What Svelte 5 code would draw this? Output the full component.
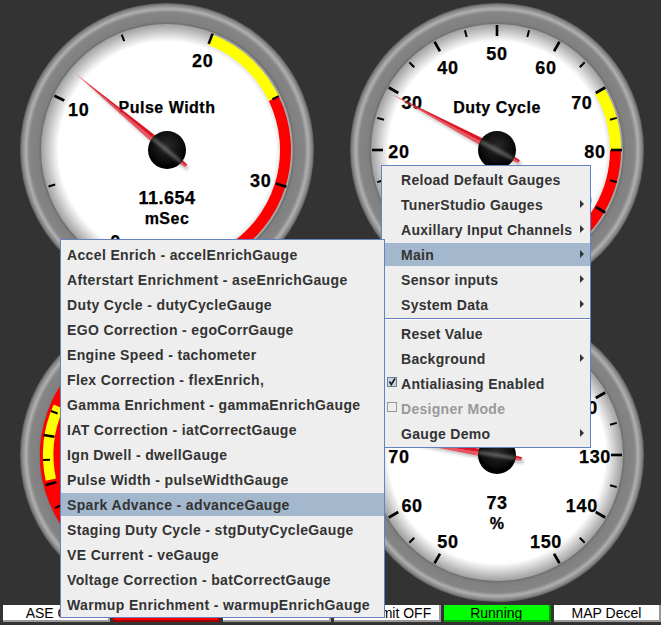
<script>
  const gauges = [
    { id: "pw", title: "Pulse Width", value: "11.654", units: "mSec", min: 0, max: 35, major: 10, minor: 5, needle: 11.654,
      arcs: [{ from: 20, to: 25, color: "#ffff00", r: 124, w: 11 }, { from: 25, to: 35, color: "#ff0000", r: 124, w: 11 }] },
    { id: "duty", title: "Duty Cycle", value: "29.3", units: "%", min: 0, max: 100, major: 10, minor: 5, needle: 29.3,
      arcs: [{ from: 70, to: 80, color: "#ffff00", r: 124, w: 11 }, { from: 80, to: 100, color: "#ff0000", r: 124, w: 11 }] },
    { id: "adv", title: "Spark Advance", value: "65.0", units: "deg", min: 0, max: 130, major: 10, minor: 5, needle: 65,
      arcs: [{ from: 0, to: 65, color: "#ff0000", r: 127, w: 22 }, { from: 20.8, to: 36.4, color: "#ffff00", r: 124, w: 10.5 }] },
    { id: "ve", title: "VE Current", value: "73", units: "%", min: 50, max: 150, major: 10, minor: 5, needle: 73, arcs: [] }
  ];

  const menuLeft = [
    "Accel Enrich - accelEnrichGauge",
    "Afterstart Enrichment - aseEnrichGauge",
    "Duty Cycle - dutyCycleGauge",
    "EGO Correction - egoCorrGauge",
    "Engine Speed - tachometer",
    "Flex Correction - flexEnrich,",
    "Gamma Enrichment - gammaEnrichGauge",
    "IAT Correction - iatCorrectGauge",
    "Ign Dwell - dwellGauge",
    "Pulse Width - pulseWidthGauge",
    "Spark Advance - advanceGauge",
    "Staging Duty Cycle - stgDutyCycleGauge",
    "VE Current - veGauge",
    "Voltage Correction - batCorrectGauge",
    "Warmup Enrichment - warmupEnrichGauge"
  ];

  const menuTop = [
    { label: "Reload Default Gauges" },
    { label: "TunerStudio Gauges", sub: true },
    { label: "Auxillary Input Channels", sub: true },
    { label: "Main", sub: true, active: true },
    { label: "Sensor inputs", sub: true },
    { label: "System Data", sub: true }
  ];

  const menuBottom = [
    { label: "Reset Value" },
    { label: "Background", sub: true },
    { label: "Antialiasing Enabled", check: true },
    { label: "Designer Mode", check: true, disabled: true },
    { label: "Gauge Demo", sub: true }
  ];

  const indicators = [
    { label: "ASE OFF" },
    { label: "", color: "red" },
    { label: "WUE OFF" },
    { label: "Rev Limit OFF" },
    { label: "Running", color: "green" },
    { label: "MAP Decel" }
  ];

  const C = 150;

  function angle(g, v) {
    return -150 + ((v - g.min) / (g.max - g.min)) * 300;
  }

  function pt(a, r) {
    const t = (a * Math.PI) / 180;
    return [C + r * Math.sin(t), C - r * Math.cos(t)];
  }

  function arcPath(g, arc) {
    const rad = arc.r - arc.w / 2;
    const a = pt(angle(g, arc.from), rad);
    const b = pt(angle(g, arc.to), rad);
    const large = angle(g, arc.to) - angle(g, arc.from) > 180 ? 1 : 0;
    return `M${a[0]} ${a[1]} A${rad} ${rad} 0 ${large} 1 ${b[0]} ${b[1]}`;
  }

  function ticks(g) {
    const out = [];
    const n = Math.round((g.max - g.min) / g.minor);
    for (let i = 0; i <= n; i++) {
      const v = g.min + i * g.minor;
      const isMajor = (v - g.min) % g.major === 0;
      const a = angle(g, v);
      const p1 = pt(a, isMajor ? 125 : 124);
      const p2 = pt(a, isMajor ? 114 : 117);
      // the lone "0" sits further out than the two digit labels
      const p3 = pt(a, v === 0 ? 103 : 98);
      out.push({ v, isMajor, x1: p1[0], y1: p1[1], x2: p2[0], y2: p2[1], lx: p3[0], ly: p3[1] + 2 });
    }
    return out;
  }
</script>

<div class="page">
  <div class="gauges">
    {#each gauges as g}
      <svg class="gauge" width="300" height="300" viewBox="0 0 300 300">
        <defs>
          <radialGradient id="bezel-{g.id}" gradientUnits="userSpaceOnUse" cx="150" cy="150" r="147">
            <stop offset="0.85" stop-color="#666666" />
            <stop offset="0.875" stop-color="#808080" />
            <stop offset="0.935" stop-color="#858585" />
            <stop offset="0.96" stop-color="#b0b0b0" />
            <stop offset="0.985" stop-color="#858585" />
            <stop offset="1" stop-color="#5c5c5c" />
          </radialGradient>
          <radialGradient id="face-{g.id}" gradientUnits="userSpaceOnUse" cx="150" cy="150" r="126">
            <stop offset="0.86" stop-color="#ffffff" />
            <stop offset="1" stop-color="#a0a0a0" />
          </radialGradient>
          <radialGradient id="hub-{g.id}" gradientUnits="userSpaceOnUse" cx="150" cy="146" r="20">
            <stop offset="0" stop-color="#2a2a2a" />
            <stop offset="0.8" stop-color="#0c0c0c" />
            <stop offset="1" stop-color="#000000" />
          </radialGradient>
          <filter id="blur-{g.id}" x="-100%" y="-30%" width="300%" height="160%">
            <feGaussianBlur stdDeviation="1.4" />
          </filter>
        </defs>

        <circle cx="150" cy="150" r="147" fill="url(#bezel-{g.id})" />
        <circle cx="150" cy="150" r="126" fill="url(#face-{g.id})" />

        {#each g.arcs as arc}
          <path d={arcPath(g, arc)} fill="none" stroke={arc.color} stroke-width={arc.w} />
        {/each}

        {#each ticks(g) as t}
          <line x1={t.x1} y1={t.y1} x2={t.x2} y2={t.y2} stroke="#000" stroke-width={t.isMajor ? 2.6 : 2} />
          {#if t.isMajor}
            <text class="label" x={t.lx} y={t.ly} dy="0.36em">{t.v}</text>
          {/if}
        {/each}

        <text class="title" x="150" y="107" dy="0.36em">{g.title}</text>
        <text class="value" x="150" y="198" dy="0.36em">{g.value}</text>
        <text class="units" x="150" y="218" dy="0.36em">{g.units}</text>

        <polygon points="150,33 154,150 152,175 148,175 146,150" fill="#000" opacity="0.22" filter="url(#blur-{g.id})"
          transform="translate(2 3) rotate({angle(g, g.needle)} 150 150)" />
        <g transform="rotate({angle(g, g.needle)} 150 150)">
          <polygon points="150,31 145.7,150 148.4,175 150,175" fill="#e85560" />
          <polygon points="150,31 154.3,150 151.6,175 150,175" fill="#dc1624" />
        </g>

        <circle cx="150" cy="150" r="19" fill="url(#hub-{g.id})" />

        <g transform="rotate({angle(g, g.needle)} 150 150)">
          <polygon points="148,131 151.5,131 151.5,169 148,169" fill="#fff" opacity="0.32" filter="url(#blur-{g.id})" />
        </g>
      </svg>
    {/each}
  </div>

  <div class="indicators">
    {#each indicators as item}
      <div class="indicator {item.color ?? ''}">{item.label}</div>
    {/each}
  </div>

  <div class="menu menu-right">
    {#each menuTop as item}
      <div class="item" class:active={item.active}>
        <span>{item.label}</span>
        {#if item.sub}<i class="arrow"></i>{/if}
      </div>
    {/each}
    <div class="sep"></div>
    {#each menuBottom as item}
      <div class="item" class:disabled={item.disabled}>
        {#if item.check}
          <svg class="check" width="10" height="10" viewBox="0 0 10 10">
            <rect x="0.5" y="0.5" width="9" height="9" fill={item.disabled ? "#eeeeee" : "#c9d6e2"} stroke={item.disabled ? "#999" : "#6b7f94"} />
            {#if !item.disabled}
              <path d="M2.5 4.5 L4.3 7.5 L8 1.5" fill="none" stroke="#222" stroke-width="1.7" />
            {/if}
          </svg>
        {/if}
        <span>{item.label}</span>
        {#if item.sub}<i class="arrow"></i>{/if}
      </div>
    {/each}
  </div>

  <div class="menu menu-left">
    {#each menuLeft as label, i}
      <div class="item" class:active={i === 10}><span>{label}</span></div>
    {/each}
  </div>
</div>

<style>
  :global(body) {
    margin: 0;
    background: #333333;
  }

  .page {
    position: relative;
    width: 661px;
    height: 625px;
    overflow: hidden;
    background: #333333;
    font-family: "Liberation Sans", Arial, sans-serif;
  }

  .gauges {
    display: grid;
    grid-template-columns: 331px 330px;
    grid-auto-rows: 300px;
    row-gap: 5px;
    padding-left: 1px;
  }

  .gauge {
    display: block;
    justify-self: center;
  }

  .label,
  .title,
  .value,
  .units {
    font-weight: bold;
    text-anchor: middle;
    fill: #000;
    stroke: #000;
    stroke-width: 0.25px;
  }

  .label {
    font-size: 18px;
    letter-spacing: 0.7px;
  }

  .title {
    font-size: 16px;
    letter-spacing: 0.5px;
  }

  .value {
    font-size: 18px;
    letter-spacing: 0.5px;
  }

  .units {
    font-size: 16px;
    letter-spacing: 0.5px;
  }

  .indicators {
    display: flex;
    gap: 3px;
    height: 17px;
    padding-left: 3px;
  }

  .indicator {
    flex: 1;
    box-sizing: border-box;
    background: #ffffff;
    border-right: 2px solid #999999;
    border-bottom: 2px solid #999999;
    color: #000;
    font-size: 14px;
    line-height: 16px;
    text-align: center;
    white-space: nowrap;
    overflow: hidden;
  }

  .indicator.green {
    background: #00ff00;
    border-color: #009900;
  }

  .indicator.red {
    background: #ff0000;
    border-color: #990000;
  }

  .menu {
    position: absolute;
    box-sizing: border-box;
    background: #eeeeee;
    border: 1px solid #6382bf;
    color: #333333;
    font-size: 14px;
    font-weight: bold;
    letter-spacing: 0.3px;
  }

  .menu-right {
    left: 381px;
    top: 165px;
    width: 210px;
    height: 283px;
    padding-top: 1px;
  }

  .menu-left {
    left: 60px;
    top: 239px;
    width: 325px;
    height: 379px;
    padding-top: 2px;
    letter-spacing: 0.36px;
    z-index: 1;
  }

  .item {
    position: relative;
    display: flex;
    align-items: center;
    height: 25px;
    white-space: nowrap;
  }

  .item span {
    position: relative;
  }

  .menu-right .item {
    padding-left: 19px;
  }

  .menu-left .item {
    padding-left: 6px;
  }

  .item.active::before {
    content: "";
    position: absolute;
    inset: 1px 0;
    background: #a3b8cc;
  }

  .item.disabled {
    color: #999999;
  }

  .sep {
    height: 1px;
    margin: 1px 0 2px;
    background: #6382bf;
    box-shadow: 0 1px 0 #ffffff;
  }

  .arrow {
    position: absolute;
    right: 6px;
    top: 8px;
    width: 0;
    height: 0;
    border-left: 4px solid #333333;
    border-top: 4px solid transparent;
    border-bottom: 4px solid transparent;
  }

  .check {
    position: absolute;
    left: 5px;
    top: 6px;
  }
</style>
